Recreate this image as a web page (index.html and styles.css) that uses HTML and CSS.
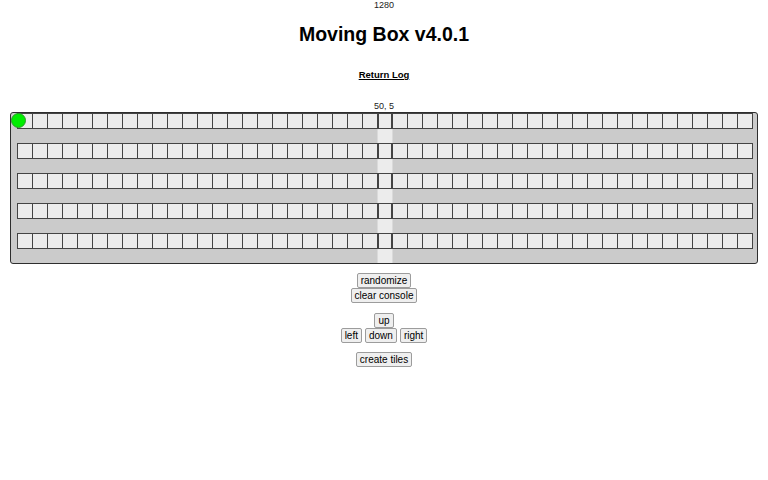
FILE: index.html
```html
<!DOCTYPE html>
<html>
<head>
<meta charset="utf-8">
<link rel="stylesheet" href="styles.css">
</head>
<body>
<div class="page">
  <div class="size">1280</div>
  <h1 class="title">Moving Box v4.0.1</h1>
  <div class="log">Return Log</div>
  <div class="pos">50, 5</div>
  <div class="board">
    <div class="row"><span class="t"></span><span class="t"></span><span class="t"></span><span class="t"></span><span class="t"></span><span class="t"></span><span class="t"></span><span class="t"></span><span class="t"></span><span class="t"></span><span class="t"></span><span class="t"></span><span class="t"></span><span class="t"></span><span class="t"></span><span class="t"></span><span class="t"></span><span class="t"></span><span class="t"></span><span class="t"></span><span class="t"></span><span class="t"></span><span class="t"></span><span class="t"></span><span class="t mid"></span><span class="t"></span><span class="t"></span><span class="t"></span><span class="t"></span><span class="t"></span><span class="t"></span><span class="t"></span><span class="t"></span><span class="t"></span><span class="t"></span><span class="t"></span><span class="t"></span><span class="t"></span><span class="t"></span><span class="t"></span><span class="t"></span><span class="t"></span><span class="t"></span><span class="t"></span><span class="t"></span><span class="t"></span><span class="t"></span><span class="t"></span><span class="t"></span></div>
    <div class="gap"><span class="c"></span></div>
    <div class="row"><span class="t"></span><span class="t"></span><span class="t"></span><span class="t"></span><span class="t"></span><span class="t"></span><span class="t"></span><span class="t"></span><span class="t"></span><span class="t"></span><span class="t"></span><span class="t"></span><span class="t"></span><span class="t"></span><span class="t"></span><span class="t"></span><span class="t"></span><span class="t"></span><span class="t"></span><span class="t"></span><span class="t"></span><span class="t"></span><span class="t"></span><span class="t"></span><span class="t mid"></span><span class="t"></span><span class="t"></span><span class="t"></span><span class="t"></span><span class="t"></span><span class="t"></span><span class="t"></span><span class="t"></span><span class="t"></span><span class="t"></span><span class="t"></span><span class="t"></span><span class="t"></span><span class="t"></span><span class="t"></span><span class="t"></span><span class="t"></span><span class="t"></span><span class="t"></span><span class="t"></span><span class="t"></span><span class="t"></span><span class="t"></span><span class="t"></span></div>
    <div class="gap"><span class="c"></span></div>
    <div class="row"><span class="t"></span><span class="t"></span><span class="t"></span><span class="t"></span><span class="t"></span><span class="t"></span><span class="t"></span><span class="t"></span><span class="t"></span><span class="t"></span><span class="t"></span><span class="t"></span><span class="t"></span><span class="t"></span><span class="t"></span><span class="t"></span><span class="t"></span><span class="t"></span><span class="t"></span><span class="t"></span><span class="t"></span><span class="t"></span><span class="t"></span><span class="t"></span><span class="t mid"></span><span class="t"></span><span class="t"></span><span class="t"></span><span class="t"></span><span class="t"></span><span class="t"></span><span class="t"></span><span class="t"></span><span class="t"></span><span class="t"></span><span class="t"></span><span class="t"></span><span class="t"></span><span class="t"></span><span class="t"></span><span class="t"></span><span class="t"></span><span class="t"></span><span class="t"></span><span class="t"></span><span class="t"></span><span class="t"></span><span class="t"></span><span class="t"></span></div>
    <div class="gap"><span class="c"></span></div>
    <div class="row"><span class="t"></span><span class="t"></span><span class="t"></span><span class="t"></span><span class="t"></span><span class="t"></span><span class="t"></span><span class="t"></span><span class="t"></span><span class="t"></span><span class="t"></span><span class="t"></span><span class="t"></span><span class="t"></span><span class="t"></span><span class="t"></span><span class="t"></span><span class="t"></span><span class="t"></span><span class="t"></span><span class="t"></span><span class="t"></span><span class="t"></span><span class="t"></span><span class="t mid"></span><span class="t"></span><span class="t"></span><span class="t"></span><span class="t"></span><span class="t"></span><span class="t"></span><span class="t"></span><span class="t"></span><span class="t"></span><span class="t"></span><span class="t"></span><span class="t"></span><span class="t"></span><span class="t"></span><span class="t"></span><span class="t"></span><span class="t"></span><span class="t"></span><span class="t"></span><span class="t"></span><span class="t"></span><span class="t"></span><span class="t"></span><span class="t"></span></div>
    <div class="gap"><span class="c"></span></div>
    <div class="row"><span class="t"></span><span class="t"></span><span class="t"></span><span class="t"></span><span class="t"></span><span class="t"></span><span class="t"></span><span class="t"></span><span class="t"></span><span class="t"></span><span class="t"></span><span class="t"></span><span class="t"></span><span class="t"></span><span class="t"></span><span class="t"></span><span class="t"></span><span class="t"></span><span class="t"></span><span class="t"></span><span class="t"></span><span class="t"></span><span class="t"></span><span class="t"></span><span class="t mid"></span><span class="t"></span><span class="t"></span><span class="t"></span><span class="t"></span><span class="t"></span><span class="t"></span><span class="t"></span><span class="t"></span><span class="t"></span><span class="t"></span><span class="t"></span><span class="t"></span><span class="t"></span><span class="t"></span><span class="t"></span><span class="t"></span><span class="t"></span><span class="t"></span><span class="t"></span><span class="t"></span><span class="t"></span><span class="t"></span><span class="t"></span><span class="t"></span></div>
    <div class="gap"><span class="c"></span></div>
    <div class="ball"></div>
  </div>
  <div class="controls">
    <div class="btnrow"><button class="btn">randomize</button></div>
    <div class="btnrow"><button class="btn">clear console</button></div>
    <div class="btnrow spaced"><button class="btn">up</button></div>
    <div class="btnrow"><button class="btn">left</button><button class="btn">down</button><button class="btn">right</button></div>
    <div class="btnrow spaced2"><button class="btn">create tiles</button></div>
  </div>
</div>
</body>
</html>
```
FILE: styles.css
```css
html, body {
  margin: 0;
  padding: 0;
  background: #ffffff;
}
body {
  font-family: "Liberation Sans", Arial, sans-serif;
  color: #000;
}
.page {
  display: flex;
  flex-direction: column;
  align-items: center;
}
.size {
  font-size: 9px;
  line-height: 11px;
  height: 11px;
  color: #222;
}
.title {
  margin: 12px 0 0 0;
  font-size: 19.5px;
  line-height: 23px;
  font-weight: bold;
}
.log {
  margin-top: 23px;
  font-size: 9.5px;
  line-height: 11px;
  font-weight: bold;
  text-decoration: underline;
}
.pos {
  margin-top: 21px;
  font-size: 9px;
  line-height: 11px;
  color: #222;
}
.board {
  position: relative;
  width: 748px;
  height: 152px;
  box-sizing: border-box;
  border: 1px solid #2e2e2e;
  border-radius: 3px;
  background: #cbcbcb;
}
.row {
  display: flex;
  height: 15px;
  padding-left: 6px;
}
.t {
  flex: none;
  width: 16px;
  height: 16px;
  box-sizing: border-box;
  border: 1px solid #444;
  background: #ececec;
  margin-right: -1px;
  position: relative;
}
.t.mid {
  box-shadow: inset 1px 0 #444, inset -1px 0 #444;
  z-index: 1;
}
.gap {
  display: flex;
  height: 15px;
  padding-left: 366px;
}
.c {
  flex: none;
  width: 16px;
  height: 14px;
  margin-top: 1px;
  box-sizing: border-box;
  border-left: 1px solid #dadada;
  border-right: 1px solid #dadada;
  background: #ececec;
}
.ball {
  position: absolute;
  left: 0;
  top: 0;
  width: 15px;
  height: 15px;
  box-sizing: border-box;
  border-radius: 50%;
  background: #00ee00;
  border: 1px solid #2a9a2a;
  z-index: 2;
}
.controls {
  margin-top: 9px;
  display: flex;
  flex-direction: column;
  align-items: center;
}
.btnrow {
  display: flex;
  gap: 3px;
  height: 15px;
}
.btnrow.spaced {
  margin-top: 10px;
}
.btnrow.spaced2 {
  margin-top: 9px;
}
.btn {
  font-family: "Liberation Sans", Arial, sans-serif;
  font-size: 10px;
  line-height: 11px;
  height: 15px;
  padding: 1px 3px;
  margin: 0;
  border: 1px solid #9c9c9c;
  border-radius: 2px;
  background: #efefef;
  color: #000;
  box-sizing: border-box;
}
```
